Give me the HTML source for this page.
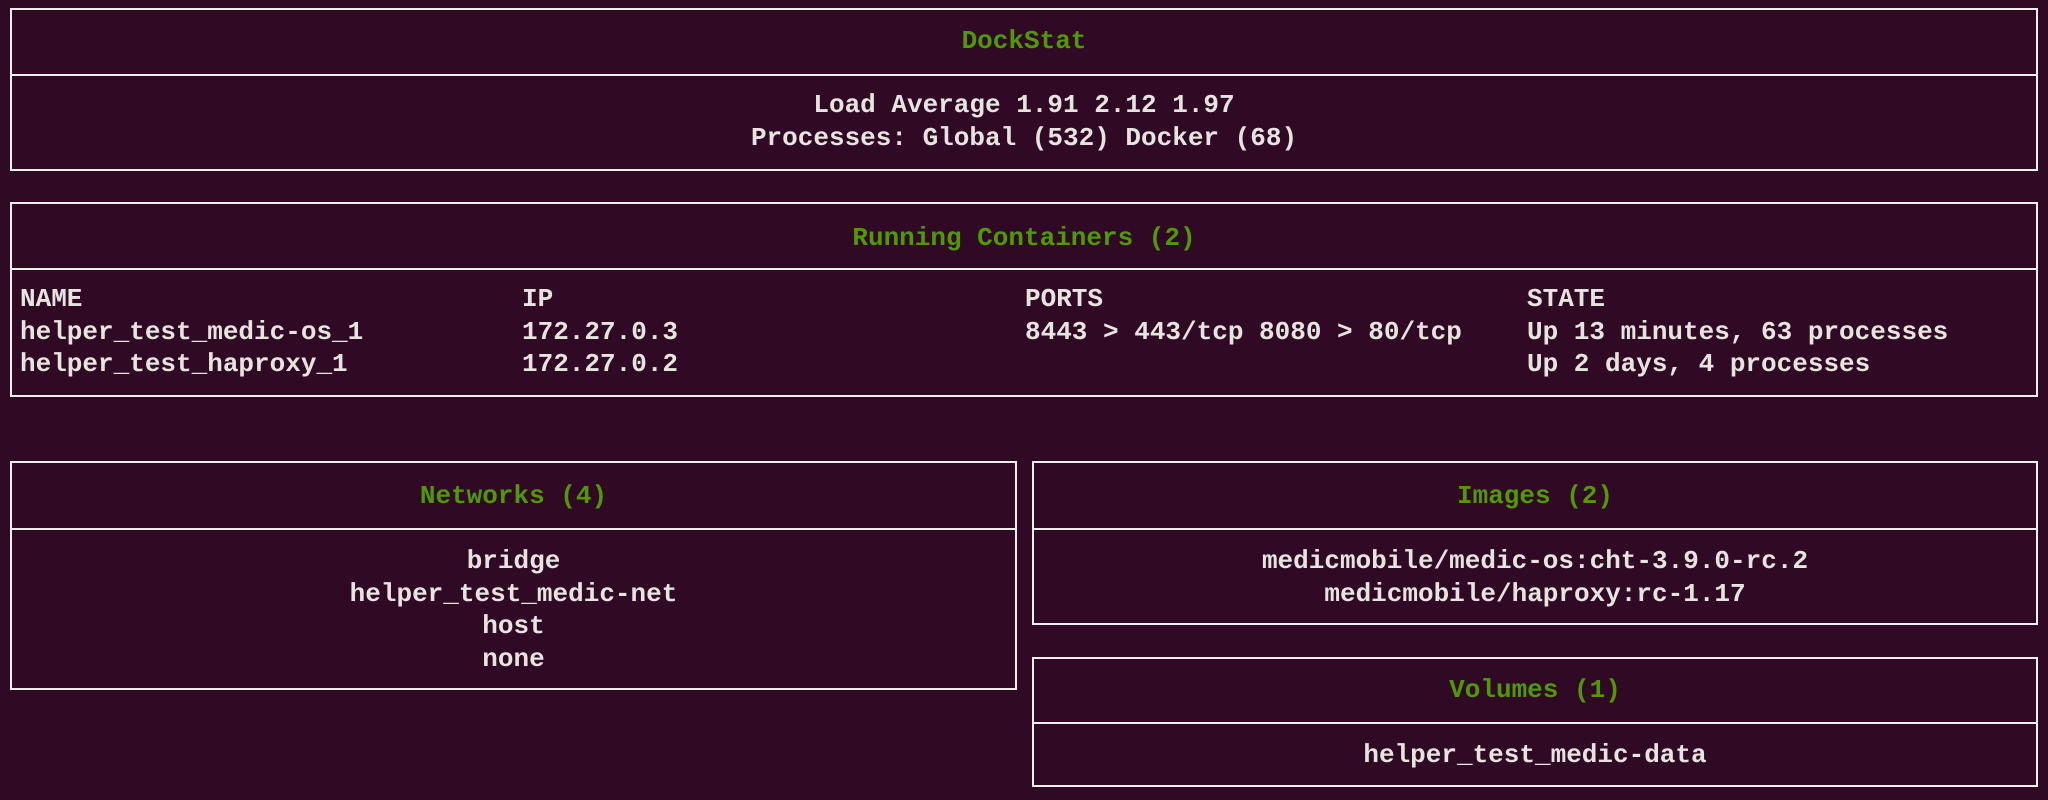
<!DOCTYPE html>
<html><head><meta charset="utf-8"><style>
html,body{margin:0;padding:0;}
body{width:2048px;height:800px;background:#300a24;position:relative;overflow:hidden;font-family:"Liberation Mono","DejaVu Sans Mono",monospace;font-weight:bold;font-size:26px;color:#e6e4df;}
.b{position:absolute;border:2px solid #eeeeec;box-sizing:border-box;}
.l{position:absolute;left:0;right:0;height:2px;background:#eeeeec;}
.t{position:absolute;left:0;right:0;text-align:center;line-height:32.6px;white-space:pre;}
.g{color:#4e9a06;}
.c{position:absolute;line-height:32.6px;white-space:pre;}
</style></head><body>
<div class="b" style="left:10px;top:8px;width:2028px;height:163px;">
  <div class="l" style="top:64px"></div>
  <div class="t g" style="top:15px">DockStat</div>
  <div class="t" style="top:79px">Load Average 1.91 2.12 1.97<br>Processes: Global (532) Docker (68)</div>
</div>
<div class="b" style="left:10px;top:202px;width:2028px;height:195px;">
  <div class="l" style="top:64px"></div>
  <div class="t g" style="top:18px">Running Containers (2)</div>
  <div class="c" style="left:8px;top:79px">NAME<br>helper_test_medic-os_1<br>helper_test_haproxy_1</div>
  <div class="c" style="left:510px;top:79px">IP<br>172.27.0.3<br>172.27.0.2</div>
  <div class="c" style="left:1013px;top:79px">PORTS<br>8443 &gt; 443/tcp 8080 &gt; 80/tcp</div>
  <div class="c" style="left:1515px;top:79px">STATE<br>Up 13 minutes, 63 processes<br>Up 2 days, 4 processes</div>
</div>
<div class="b" style="left:10px;top:461px;width:1007px;height:229px;">
  <div class="l" style="top:65px"></div>
  <div class="t g" style="top:17px">Networks (4)</div>
  <div class="t" style="top:82px">bridge<br>helper_test_medic-net<br>host<br>none</div>
</div>
<div class="b" style="left:1032px;top:461px;width:1006px;height:164px;">
  <div class="l" style="top:65px"></div>
  <div class="t g" style="top:17px">Images (2)</div>
  <div class="t" style="top:82px">medicmobile/medic-os:cht-3.9.0-rc.2<br>medicmobile/haproxy:rc-1.17</div>
</div>
<div class="b" style="left:1032px;top:657px;width:1006px;height:130px;">
  <div class="l" style="top:63px"></div>
  <div class="t g" style="top:15px">Volumes (1)</div>
  <div class="t" style="top:80px">helper_test_medic-data</div>
</div>
</body></html>
